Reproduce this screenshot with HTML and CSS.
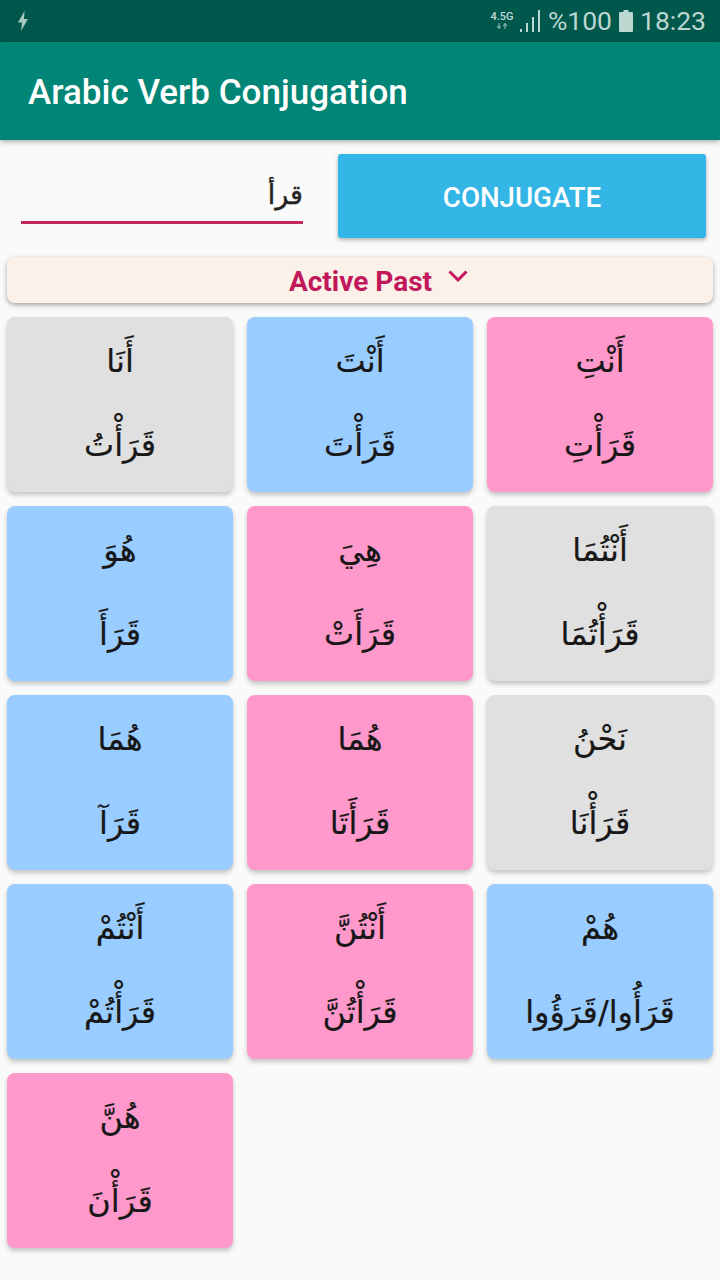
FILE: index.html
```html
<!DOCTYPE html>
<html lang="en">
<head>
<meta charset="utf-8">
<title>Arabic Verb Conjugation</title>
<link rel="stylesheet" href="styles.css">
</head>
<body>
<div class="status">
  <svg class="bolt" width="14" height="24" viewBox="0 0 14 22"><path d="M8.500 1 2 12.500h4L5 21l7-12H8z"/></svg>
  <div class="status-right">
    <span class="net"><span class="net-top">4.5G</span><svg width="12" height="6" viewBox="0 0 12 6"><path d="M3 0v4M1.200 3 3 5.500 4.800 3M9 6V2M7.200 3 9 .5 10.800 3" fill="none" stroke="#7fb0a6" stroke-width="1.200"/></svg></span>
    <svg class="signal" width="22" height="24" viewBox="0 0 22 24"><path d="M1 20h2v3H1zM7 14h2v9H7zM13 8h2v15h-2zM19 1h2v22h-2z"/></svg>
    <span class="stat-text">%100</span>
    <svg class="battery" width="14" height="22" viewBox="0 0 14 22"><path d="M4.500 0h5v2H13a1 1 0 0 1 1 1v18a1 1 0 0 1-1 1H1a1 1 0 0 1-1-1V3a1 1 0 0 1 1-1h3.500z"/></svg>
    <span class="stat-text">18:23</span>
  </div>
</div>
<header class="appbar">Arabic Verb Conjugation</header>
<main>
  <div class="form-row">
    <div class="input" dir="rtl">قرأ</div>
    <button class="btn">CONJUGATE</button>
  </div>
  <div class="spinner">
    <span>Active Past</span>
    <svg width="22" height="14" viewBox="0 0 22 14"><path d="M2.500 2.500 11 11l8.500-8.500" fill="none" stroke="#c2185b" stroke-width="3"/></svg>
  </div>
  <div class="grid">
    <div class="card grey"><p>أَنَا</p><p>قَرَأْتُ</p></div>
    <div class="card blue"><p>أَنْتَ</p><p>قَرَأْتَ</p></div>
    <div class="card pink"><p>أَنْتِ</p><p>قَرَأْتِ</p></div>
    <div class="card blue"><p>هُوَ</p><p>قَرَأَ</p></div>
    <div class="card pink"><p>هِيَ</p><p>قَرَأَتْ</p></div>
    <div class="card grey"><p>أَنْتُمَا</p><p>قَرَأْتُمَا</p></div>
    <div class="card blue"><p>هُمَا</p><p>قَرَآ</p></div>
    <div class="card pink"><p>هُمَا</p><p>قَرَأَتَا</p></div>
    <div class="card grey"><p>نَحْنُ</p><p>قَرَأْنَا</p></div>
    <div class="card blue"><p>أَنْتُمْ</p><p>قَرَأْتُمْ</p></div>
    <div class="card pink"><p>أَنْتُنَّ</p><p>قَرَأْتُنَّ</p></div>
    <div class="card blue"><p>هُمْ</p><p>قَرَأُوا/قَرَؤُوا</p></div>
    <div class="card pink"><p>هُنَّ</p><p>قَرَأْنَ</p></div>
  </div>
</main>
</body>
</html>
```
FILE: styles.css
```css
* { box-sizing: border-box; }
html, body { margin: 0; height: 1280px; overflow: hidden; }
body { background: #fafafa; font-family: Roboto, sans-serif; }

.status {
  height: 42px;
  background: #00574b;
  display: flex;
  align-items: center;
  justify-content: space-between;
  padding: 0 14px 0 16px;
}
.bolt path { fill: #a9c9c2; }
.status-right { display: flex; align-items: center; color: #bcd6d0; }
.net { display: flex; flex-direction: column; align-items: center; width: 24px; margin-right: 5px; margin-top: -2px; }
.net-top { font-size: 11px; line-height: 12px; font-weight: 500; color: #c4dbd6; }
.net svg { display: block; }
.signal { margin-right: 7px; }
.signal path { fill: #bcd6d0; }
.stat-text { font-size: 26.500px; line-height: 42px; }
.battery { margin: 0 7px 0 7px; }
.battery path { fill: #bcd6d0; }

.appbar {
  height: 98px;
  background: #008577;
  color: #fff;
  font-size: 35px;
  font-weight: 500;
  line-height: 101px;
  padding-left: 28px;
  box-shadow: 0 2px 5px rgba(0,0,0,.3);
  position: relative;
}

main { padding: 14px 7px 0; }

.form-row { display: flex; align-items: flex-start; height: 84px; padding: 0 7px 0 14px; }
.input {
  width: 282px;
  height: 70px;
  margin-right: 35px;
  border-bottom: 3px solid #c2285f;
  font-family: "DejaVu Sans", sans-serif;
  font-size: 27px;
  -webkit-text-stroke: 0.400px #212121;
  line-height: 82px;
  color: #212121;
  text-align: right;
  direction: ltr;
}
.btn {
  width: 368px;
  height: 84px;
  border: 0;
  border-radius: 3px;
  background: #33b5e5;
  color: #fff;
  font-family: Roboto, sans-serif;
  font-size: 27.700px;
  font-weight: 500;
  box-shadow: 0 2px 4px rgba(0,0,0,.3);
  padding: 2px 0 0;
}

.spinner {
  margin-top: 19px;
  height: 46px;
  border-radius: 8px;
  background: #fbf1e8;
  box-shadow: 0 2px 5px rgba(0,0,0,.35);
  display: flex;
  align-items: center;
  justify-content: center;
  gap: 15px;
  color: #c2185b;
  font-size: 28px;
  font-weight: 700;
  padding: 3px 0 0 38px;
}
.spinner svg { margin-bottom: 11px; }

.grid {
  margin-top: 14px;
  display: grid;
  grid-template-columns: repeat(3, 226px);
  grid-auto-rows: 175px;
  gap: 14px;
}
.card {
  border-radius: 8px;
  box-shadow: 0 3px 5px rgba(0,0,0,.22);
  display: flex;
  flex-direction: column;
  align-items: center;
  font-family: "DejaVu Sans", sans-serif;
  font-size: 32px;
  color: #171717;
  -webkit-text-stroke: 0.200px #171717;
  padding-top: 21px;
}
.card p { margin: 0; height: 85px; line-height: 46px; direction: rtl; }
.card p + p { padding-top: 7px; }
.grey { background: #e0e0e0; }
.blue { background: #99ccff; }
.pink { background: #ff99cc; }
```
